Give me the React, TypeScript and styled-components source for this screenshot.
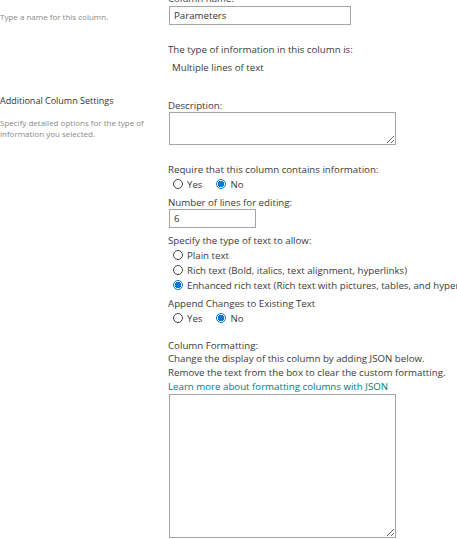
import React from "react";
import styled, { createGlobalStyle } from "styled-components";

const Global = createGlobalStyle`
  html, body { margin: 0; padding: 0; background: #fff; }
  body { font-family: "Open Sans", "Noto Sans", sans-serif; color: #333; overflow: hidden; }
  * { box-sizing: border-box; }
`;

const FS = 9.7;

const Page = styled.div`
  width: 457px;
  height: 539px;
  overflow: hidden;
`;

const Scroller = styled.div`
  margin-top: -8px;
`;

const Section = styled.div<{ $gap?: number }>`
  display: grid;
  grid-template-columns: 168px 1fr;
  margin-top: ${(p) => p.$gap ?? 0}px;
`;

const Side = styled.div<{ $pad?: number }>`
  padding-top: ${(p) => p.$pad ?? 0}px;
  padding-right: 12px;
`;

const SideTitle = styled.div`
  font-size: 9px;
  line-height: 13px;
  color: #333;
  white-space: nowrap;
`;

const SideDesc = styled.div<{ $mt?: number }>`
  font-size: 8px;
  line-height: 11px;
  color: #8a8a8a;
  margin-top: ${(p) => p.$mt ?? 0}px;
`;

const Main = styled.div`
  display: flex;
  flex-direction: column;
  align-items: flex-start;
  white-space: nowrap;
`;

const Label = styled.div<{ $mt?: number; $indent?: number }>`
  font-size: ${FS}px;
  line-height: 13px;
  color: #3a3a3a;
  margin-top: ${(p) => p.$mt ?? 0}px;
  padding-left: ${(p) => p.$indent ?? 0}px;
`;

const TextInput = styled.input<{ $w: number; $mt?: number }>`
  width: ${(p) => p.$w}px;
  height: 19px;
  margin: ${(p) => p.$mt ?? 0}px 0 0 1px;
  border: 1px solid #a6a6a6;
  padding: 0 4px;
  font: inherit;
  font-size: ${FS}px;
  color: #333;
  outline: none;
  background: #fff;
`;

const TextBox = styled.textarea<{ $w: number; $h: number; $mt?: number }>`
  display: block;
  width: ${(p) => p.$w}px;
  height: ${(p) => p.$h}px;
  margin: ${(p) => p.$mt ?? 0}px 0 0 1px;
  border: 1px solid #a6a6a6;
  padding: 2px 4px;
  font: inherit;
  font-size: ${FS}px;
  resize: both;
  outline: none;
  background: #fff;
`;

const RadioGroup = styled.div<{ $mt?: number; $inline?: boolean; $row: number }>`
  display: flex;
  flex-direction: ${(p) => (p.$inline ? "row" : "column")};
  gap: ${(p) => (p.$inline ? 14 : 0)}px;
  margin-top: ${(p) => p.$mt ?? 0}px;
  padding-left: 5px;
  & > label { height: ${(p) => p.$row}px; }
`;

const Option = styled.label`
  display: flex;
  align-items: center;
  gap: 4px;
  font-size: ${FS}px;
  color: #3a3a3a;
`;

const Radio = styled.input.attrs({ type: "radio" })`
  appearance: none;
  margin: 0;
  width: 10px;
  height: 10px;
  border-radius: 50%;
  border: 1px solid #444;
  background: #fff;
  flex: none;
  &:checked {
    border-color: #0078d4;
    background: radial-gradient(circle, #0078d4 0 3px, #fff 3.4px);
  }
`;

const Link = styled.a`
  color: #03787c;
  text-decoration: none;
`;

const Paragraph = styled.div<{ $mt?: number }>`
  font-size: ${FS}px;
  line-height: 13.8px;
  color: #3a3a3a;
  margin-top: ${(p) => p.$mt ?? 0}px;
`;

export default function App() {
  return (
    <Page>
      <Global />
      <Scroller>
        <Section>
          <Side $pad={19}>
            <SideDesc>Type a name for this column.</SideDesc>
          </Side>
          <Main>
            <Label>Column name:</Label>
            <TextInput $w={182} $mt={1} defaultValue="Parameters" />
            <Label $mt={18}>The type of information in this column is:</Label>
            <Label $mt={5} $indent={4}>Multiple lines of text</Label>
          </Main>
        </Section>
        <Section $gap={19}>
          <Side $pad={0.5}>
            <SideTitle>Additional Column Settings</SideTitle>
            <SideDesc $mt={10}>
              Specify detailed options for the type of information you selected.
            </SideDesc>
          </Side>
          <Main>
            <Label $mt={5.5}>Description:</Label>
            <TextBox $w={227} $h={33} $mt={0.5} />
            <Label $mt={17.5}>Require that this column contains information:</Label>
            <RadioGroup $inline $row={13} $mt={2}>
              <Option><Radio name="req" />Yes</Option>
              <Option><Radio name="req" defaultChecked />No</Option>
            </RadioGroup>
            <Label $mt={5}>Number of lines for editing:</Label>
            <TextInput $w={87} $mt={0.5} defaultValue="6" />
            <Label $mt={5.5}>Specify the type of text to allow:</Label>
            <RadioGroup $row={15} $mt={1}>
              <Option><Radio name="tt" />Plain text</Option>
              <Option><Radio name="tt" />Rich text (Bold, italics, text alignment, hyperlinks)</Option>
              <Option><Radio name="tt" defaultChecked />Enhanced rich text (Rich text with pictures, tables, and hyperlinks)</Option>
            </RadioGroup>
            <Label $mt={4}>Append Changes to Existing Text</Label>
            <RadioGroup $inline $row={13} $mt={2}>
              <Option><Radio name="app" />Yes</Option>
              <Option><Radio name="app" defaultChecked />No</Option>
            </RadioGroup>
            <Paragraph $mt={14}>
              Column Formatting:
              <br />
              Change the display of this column by adding JSON below.
              <br />
              Remove the text from the box to clear the custom formatting.
              <br />
              <Link href="#">Learn more about formatting columns with JSON</Link>
            </Paragraph>
            <TextBox $w={227} $h={144} $mt={0} />
          </Main>
        </Section>
      </Scroller>
    </Page>
  );
}
